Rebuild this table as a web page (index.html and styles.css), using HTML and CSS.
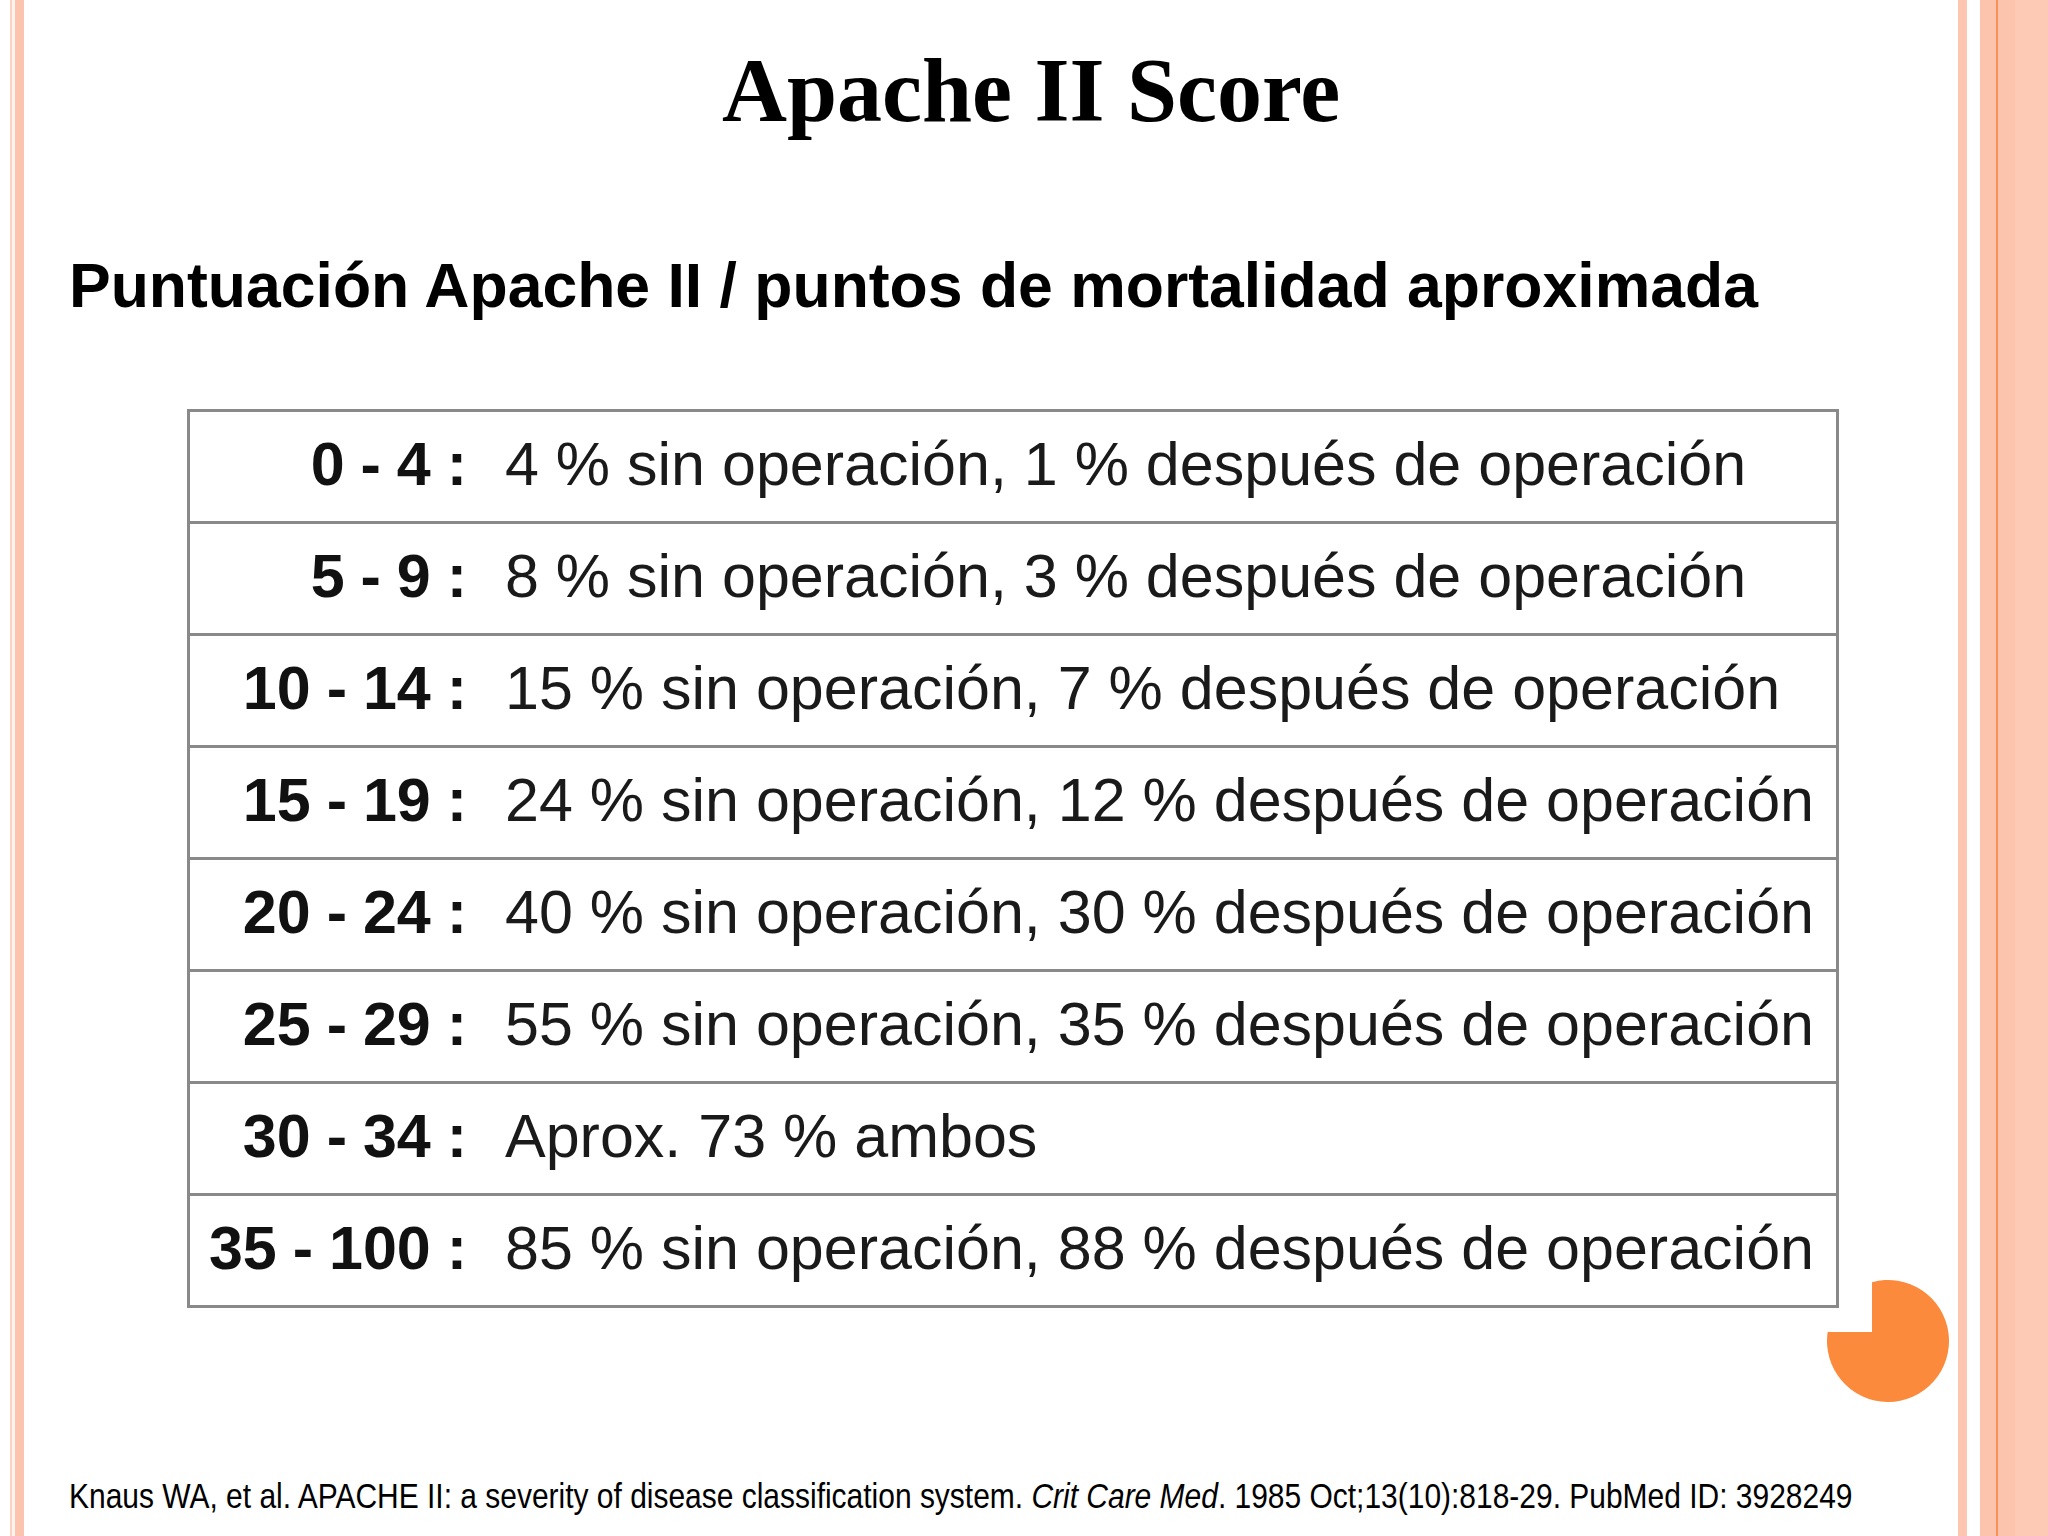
FILE: index.html
```html
<!DOCTYPE html>
<html lang="es">
<head>
<meta charset="utf-8">
<title>Apache II Score</title>
<link rel="stylesheet" href="styles.css">
</head>
<body>
<div class="slide">
  <h1 class="title">Apache II Score</h1>
  <h2 class="subtitle">Puntuación Apache II / puntos de mortalidad aproximada</h2>
  <div class="score-table">
    <div class="row"><span class="range">0 - 4 :</span><span class="value">4 % sin operación, 1 % después de operación</span></div>
    <div class="row"><span class="range">5 - 9 :</span><span class="value">8 % sin operación, 3 % después de operación</span></div>
    <div class="row"><span class="range">10 - 14 :</span><span class="value">15 % sin operación, 7 % después de operación</span></div>
    <div class="row"><span class="range">15 - 19 :</span><span class="value">24 % sin operación, 12 % después de operación</span></div>
    <div class="row"><span class="range">20 - 24 :</span><span class="value">40 % sin operación, 30 % después de operación</span></div>
    <div class="row"><span class="range">25 - 29 :</span><span class="value">55 % sin operación, 35 % después de operación</span></div>
    <div class="row"><span class="range">30 - 34 :</span><span class="value">Aprox. 73 % ambos</span></div>
    <div class="row"><span class="range">35 - 100 :</span><span class="value">85 % sin operación, 88 % después de operación</span></div>
  </div>
  <p class="footer"><span class="footer-text">Knaus WA, et al. APACHE II: a severity of disease classification system. <em>Crit Care Med</em>. 1985 Oct;13(10):818-29. PubMed ID: 3928249</span></p>
  <svg class="pie" width="122" height="122" viewBox="0 0 122 122" aria-hidden="true">
    <path d="M45 52 V2.14 A61 61 0 1 1 0.67 52 Z" fill="#fc8a3c"/>
  </svg>
</div>
</body>
</html>
```
FILE: styles.css
```css
html, body {
  margin: 0;
  padding: 0;
  background: #ffffff;
}

.slide {
  position: relative;
  width: 2048px;
  height: 1536px;
  box-sizing: border-box;
  padding: 46px 0 23px 69px;
  display: flex;
  flex-direction: column;
  align-items: flex-start;
  overflow: hidden;
  background:
    linear-gradient(to right,
      #ffffff 0, #ffffff 10px,
      #fcd3c3 10px, #fcd3c3 12px,
      #fff3ee 12px, #fff3ee 15px,
      #fcc4ae 15px, #fcc4ae 24px,
      #ffffff 24px, #ffffff 1958px,
      #fcc6b1 1958px, #fcc6b1 1967px,
      #ffffff 1967px, #ffffff 1980px,
      #fcc4ad 1980px, #fcc4ad 1996px,
      #f8925a 1996px, #f8925a 1998px,
      #fcc4ad 1998px, #fcc4ad 2015px,
      #fdcab6 2015px, #fdcab6 2048px);
}

.title {
  margin: 0 0 0 653px;
  font-family: "Liberation Serif", "Times New Roman", serif;
  font-weight: bold;
  font-size: 90px;
  line-height: 90px;
  color: #000;
  white-space: nowrap;
}

.subtitle {
  margin: 118px 0 0 0;
  font-family: "Liberation Sans", Arial, sans-serif;
  font-weight: bold;
  font-size: 62.5px;
  line-height: 62.5px;
  color: #000;
  white-space: nowrap;
}

.score-table {
  margin: 92px 0 0 118px;
  width: 1652px;
  box-sizing: border-box;
  border: 3px solid #898989;
  background: #fff;
  display: flex;
  flex-direction: column;
}

.row {
  height: 109px;
  display: grid;
  grid-template-columns: 277px 1fr;
  column-gap: 38px;
  align-items: center;
  font-family: "Liberation Sans", Arial, sans-serif;
  font-size: 61px;
  color: #111;
  padding-bottom: 4px;
  box-sizing: border-box;
}

.row + .row {
  border-top: 3px solid #898989;
  height: 112px;
}

.range {
  font-weight: bold;
  text-align: right;
  white-space: nowrap;
  word-spacing: -1px;
}

.value {
  white-space: nowrap;
  color: #1a1a1a;
}

.footer {
  margin: auto 0 0 0;
  font-family: "Liberation Sans", Arial, sans-serif;
  font-size: 35px;
  line-height: 35px;
  color: #000;
  white-space: nowrap;
}

.footer-text {
  display: inline-block;
  transform: scaleX(0.856);
  transform-origin: left center;
}

.footer em {
  font-style: italic;
}

.pie {
  position: absolute;
  left: 1827px;
  top: 1280px;
  display: block;
}
```
